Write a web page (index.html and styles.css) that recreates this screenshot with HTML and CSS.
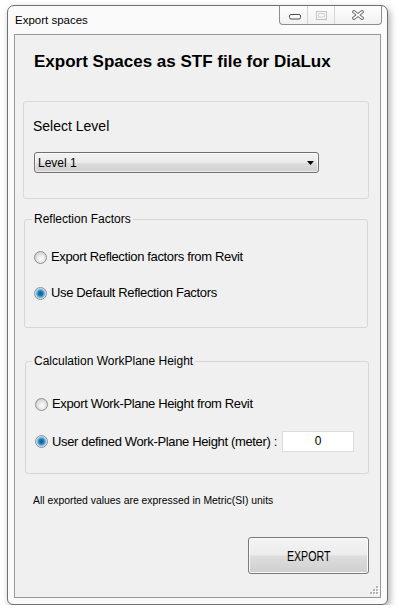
FILE: index.html
```html
<!DOCTYPE html>
<html>
<head>
<meta charset="utf-8">
<title>Export spaces</title>
<link rel="stylesheet" href="styles.css">
</head>
<body>
<div class="window">
  <div class="titlebar">
    <span class="title">Export spaces</span>
    <div class="caption-buttons">
      <div class="cap cap-min">
        <svg width="12" height="6" viewBox="0 0 12 6"><rect x="0.5" y="0.5" width="11" height="4.5" rx="1.5" fill="#fdfdfd" stroke="#4d4d4d"/></svg>
      </div>
      <div class="cap cap-max">
        <svg width="11" height="9" viewBox="0 0 11 9"><rect x="0.5" y="0.5" width="10" height="8" fill="none" stroke="#c2c2c2"/><rect x="2.5" y="2.5" width="6" height="3.5" fill="none" stroke="#d2d2d2"/></svg>
      </div>
      <div class="cap cap-close">
        <svg width="12" height="10" viewBox="0 0 12 10"><path d="M2 1.8 L10 8.2 M10 1.8 L2 8.2" stroke="#6f6f6f" stroke-width="3.4" stroke-linecap="square"/><path d="M2 1.8 L10 8.2 M10 1.8 L2 8.2" stroke="#ffffff" stroke-width="1.5" stroke-linecap="square"/></svg>
      </div>
    </div>
  </div>
  <div class="client">
    <h1 class="heading">Export Spaces as STF file for DiaLux</h1>

    <div class="panel">
      <div class="panel-label">Select Level</div>
      <div class="combo">
        <span class="combo-text">Level 1</span>
        <svg class="combo-arrow" width="7" height="4" viewBox="0 0 7 4"><path d="M0 0 H7 L3.5 4 Z" fill="#000"/></svg>
      </div>
    </div>

    <fieldset class="group group-reflect">
      <legend class="group-legend">Reflection Factors</legend>
      <div class="radio-row">
        <span class="radio"></span><span class="radio-text">Export Reflection factors from Revit</span>
      </div>
      <div class="radio-row radio-row-next">
        <span class="radio radio-checked"></span><span class="radio-text">Use Default Reflection Factors</span>
      </div>
    </fieldset>

    <fieldset class="group group-height">
      <legend class="group-legend">Calculation WorkPlane Height</legend>
      <div class="radio-row">
        <span class="radio"></span><span class="radio-text">Export Work-Plane Height from Revit</span>
      </div>
      <div class="radio-row radio-row-input">
        <span class="radio radio-checked"></span><span class="radio-text radio-text-fixed">User defined Work-Plane Height (meter) :</span>
        <div class="num-input">0</div>
      </div>
    </fieldset>

    <p class="note">All exported values are expressed in Metric(SI) units</p>

    <button class="btn"><span class="btn-text">EXPORT</span></button>

    <svg class="grip" width="12" height="12" viewBox="0 0 12 12">
      <g fill="#ffffff"><rect x="10" y="3" width="2" height="2"/><rect x="10" y="6" width="2" height="2"/><rect x="7" y="6" width="2" height="2"/><rect x="10" y="9" width="2" height="2"/><rect x="7" y="9" width="2" height="2"/><rect x="4" y="9" width="2" height="2"/></g>
      <g fill="#b4b4b4"><rect x="9" y="2" width="2" height="2"/><rect x="9" y="5" width="2" height="2"/><rect x="6" y="5" width="2" height="2"/><rect x="9" y="8" width="2" height="2"/><rect x="6" y="8" width="2" height="2"/><rect x="3" y="8" width="2" height="2"/></g>
    </svg>
  </div>
</div>
</body>
</html>
```

FILE: styles.css
```css
html, body {
  margin: 0;
  padding: 0;
  background: #ffffff;
}

body {
  font-family: "Liberation Sans", Arial, sans-serif;
  color: #000;
}

.window {
  margin: 5px 0 0 7px;
  width: 381px;
  height: 600px;
  box-sizing: border-box;
  border: 1px solid #707070;
  border-radius: 7px 7px 6px 6px;
  background: #fafafa;
  box-shadow: 2px 3px 7px rgba(0, 0, 0, 0.32);
  padding: 0 6px 6px 6px;
  display: flex;
  flex-direction: column;
}

.titlebar {
  height: 28px;
  display: flex;
  align-items: flex-start;
}

.title {
  margin: 7px 0 0 1px;
  font-size: 11.5px;
  line-height: 14px;
  color: #000;
}

.caption-buttons {
  margin-left: auto;
  margin-right: -1px;
  display: flex;
  height: 19px;
  box-sizing: border-box;
  border: 1px solid #8d8d8d;
  border-top: none;
  border-radius: 0 0 4px 4px;
  background: linear-gradient(#fefefe, #f1f1f1);
  overflow: hidden;
}

.cap {
  display: flex;
  align-items: center;
  justify-content: center;
  height: 100%;
  box-sizing: border-box;
}

.cap-min {
  width: 27px;
  padding-top: 3px;
  padding-left: 2px;
}

.cap-max {
  width: 27px;
  border-left: 1px solid #d4d4d4;
}

.cap-close {
  width: 47px;
  border-left: 1px solid #d4d4d4;
}

.client {
  position: relative;
  height: 564px;
  box-sizing: border-box;
  border: 1px solid #999999;
  background: #f0f0f0;
  display: flex;
  flex-direction: column;
  align-items: flex-start;
}

.heading {
  margin: 17px 0 0 19px;
  font-size: 17px;
  line-height: 20px;
  font-weight: bold;
}

.panel {
  margin: 29px 0 0 8px;
  width: 346px;
  box-sizing: border-box;
  border: 1px solid #d9d9d9;
  border-radius: 3px;
  padding: 16px 9px 25px 9px;
}

.panel-label {
  font-size: 14px;
  line-height: 16px;
}

.combo {
  margin: 18px 0 0 1px;
  width: 285px;
  height: 21px;
  box-sizing: border-box;
  border: 1px solid #707070;
  border-radius: 3px;
  background: linear-gradient(#f3f3f3 0%, #ebebeb 50%, #dddddd 51%, #d0d0d0 100%);
  box-shadow: inset 0 0 0 1px rgba(255, 255, 255, 0.6);
  display: flex;
  align-items: center;
  justify-content: space-between;
  padding: 0 4px 0 3px;
}

.combo-text {
  font-size: 12px;
  line-height: 14px;
}

.combo-arrow {
  display: block;
  margin-top: 1px;
}

.group {
  box-sizing: border-box;
  width: 344px;
  border: 1px solid #d6d6d6;
  border-radius: 3px;
  min-inline-size: 0;
}

.group-reflect {
  margin: 13px 0 0 9px;
  padding: 23px 9px 26px 9px;
}

.group-height {
  margin: 26px 0 0 10px;
  padding: 28px 9px 21px 9px;
}

.group-legend {
  font-size: 12px;
  line-height: 14px;
  padding: 0 2px;
  margin-left: -2px;
}

.group-height .group-legend {
  margin-left: -3px;
}

.radio-row {
  display: flex;
  align-items: center;
  height: 16px;
}

.radio-row-next {
  margin-top: 20px;
}

.radio-row-input {
  margin-top: 19px;
  height: 21px;
}

.radio {
  flex: none;
  width: 13px;
  height: 13px;
  box-sizing: border-box;
  border-radius: 50%;
  border: 1px solid #8f9091;
  background: radial-gradient(circle at 55% 60%, #ffffff 0%, #eeeeee 30%, #c9c9c9 85%);
  margin-right: 4px;
  position: relative;
}

.radio-checked {
  background: radial-gradient(circle at 50% 50%, #135a8e 0%, #1f79b6 30%, #7fc2ea 55%, #e6e6e6 70%, #cfcfcf 100%);
}

.radio-text {
  font-size: 13px;
  line-height: 16px;
  letter-spacing: -0.35px;
  white-space: nowrap;
}

.radio-text-fixed {
  width: 226px;
  flex: none;
}

.num-input {
  margin-left: 4px;
  width: 72px;
  height: 21px;
  box-sizing: border-box;
  border: 1px solid #dcdcdc;
  background: #ffffff;
  font-size: 12px;
  line-height: 19px;
  text-align: center;
}

.note {
  margin: 20px 0 0 18px;
  font-size: 10.4px;
  line-height: 13px;
}

.btn {
  align-self: flex-end;
  margin: 30px 11px 0 0;
  width: 121px;
  height: 37px;
  box-sizing: border-box;
  border: 1px solid #7a7a7a;
  border-radius: 3px;
  background: linear-gradient(#f4f4f4 0%, #ececec 48%, #dddddd 52%, #cfcfcf 100%);
  box-shadow: inset 0 0 0 1px #fafafa;
  padding: 0;
  font-family: "Liberation Sans", Arial, sans-serif;
  color: #000;
  display: flex;
  align-items: center;
  justify-content: center;
}

.btn-text {
  display: inline-block;
  font-size: 14px;
  line-height: 16px;
  transform: scaleX(0.76);
}

.grip {
  position: absolute;
  right: 1px;
  bottom: 1px;
}
```
